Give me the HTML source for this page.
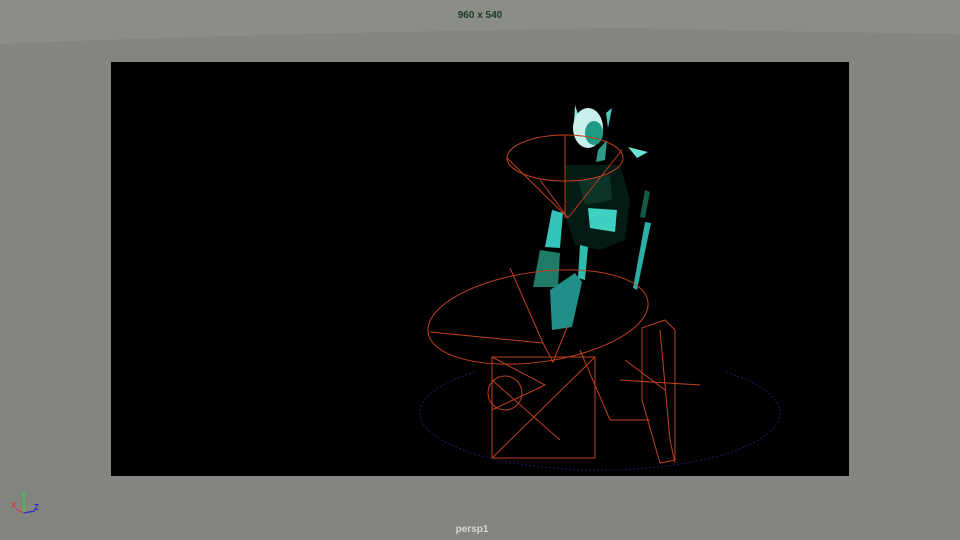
<!DOCTYPE html>
<html><head><meta charset="utf-8"><style>
html,body{margin:0;padding:0;width:960px;height:540px;overflow:hidden;background:#838581;font-family:"Liberation Sans",sans-serif}
</style></head><body>
<svg width="960" height="540" viewBox="0 0 960 540" xmlns="http://www.w3.org/2000/svg" style="position:absolute;left:0;top:0">
<defs><clipPath id="lo"><rect x="0" y="372" width="960" height="120"/></clipPath></defs>
<rect x="0" y="0" width="960" height="540" fill="#838581"/>
<path d="M0 0H960V34L820 32 L620 28 L500 30 L300 34 L100 40 L0 44Z" fill="#8b8d89"/>
<text x="480" y="18" text-anchor="middle" font-size="10" font-weight="bold" fill="#1f3a22" font-family="Liberation Sans, sans-serif">960 x 540</text>
<rect x="111" y="62" width="738" height="414" fill="#000"/>
<g>
<ellipse cx="600" cy="413" rx="180" ry="57" fill="none" stroke="#1a1a6a" stroke-width="1" stroke-dasharray="2 2" clip-path="url(#lo)"/>
<polygon points="565,165 620,165 630,200 625,240 600,250 575,245 565,215" fill="#041a14"/>
<polygon points="578,180 610,175 612,200 585,205" fill="#0c3328"/>
<polygon points="552,210 563,213 560,248 545,247" fill="#33c4bb"/>
<polygon points="588,208 617,210 615,232 590,228" fill="#3fd0c4"/>
<polygon points="580,245 588,247 585,280 578,278" fill="#2fbcb0"/>
<polygon points="540,250 560,253 558,287 533,287" fill="#1f7a66"/>
<polygon points="550,290 575,273 582,282 572,327 552,330" fill="#1f8f88"/>
<polygon points="645,222 651,223 637,290 633,288" fill="#2ab0a8"/>
<polygon points="645,190 650,192 645,218 640,217" fill="#145a48"/>
<polygon points="628,147 648,152 637,158" fill="#6fe0d4"/>
<polygon points="575,105 580,120 574,122" fill="#7fe8e0"/>
<polygon points="606,113 612,108 608,128" fill="#4fc8be"/>
<ellipse cx="588" cy="128" rx="15" ry="20" fill="#c8f0ea"/>
<ellipse cx="594" cy="133" rx="9" ry="12" fill="#1f9a84"/>
<polygon points="598,150 607,140 605,160 596,162" fill="#2f9a88"/>
</g>
<g fill="none" stroke="#c0401e" stroke-width="1">
<ellipse cx="565" cy="158" rx="58" ry="23"/>
<line x1="507" y1="158" x2="568" y2="218"/>
<line x1="622" y1="150" x2="568" y2="218"/>
<line x1="565" y1="135" x2="565" y2="218"/>
<line x1="540" y1="180" x2="568" y2="218"/>
<ellipse cx="538" cy="317" rx="111" ry="45" transform="rotate(-8 538 317)"/>
<polyline points="430,332 543,343 553,362 568,325"/>
<line x1="510" y1="268" x2="543" y2="343"/>
<rect x="492" y="357" width="103" height="101"/>
<polyline points="492,357 545,385 492,410"/>
<line x1="492" y1="458" x2="595" y2="357"/>
<line x1="492" y1="380" x2="560" y2="440"/>
<circle cx="505" cy="393" r="17"/>
<polygon points="642,328 665,320 675,330 675,460 660,463 642,400"/>
<polyline points="660,330 670,440 675,463"/>
<line x1="620" y1="380" x2="700" y2="385"/>
<line x1="625" y1="360" x2="665" y2="390"/>
<line x1="580" y1="350" x2="610" y2="420"/>
<line x1="610" y1="420" x2="650" y2="420"/>
</g>
<g stroke-width="1.2" fill="none">
<line x1="24" y1="513" x2="24" y2="497" stroke="#3ad43a"/>
<line x1="24" y1="513" x2="16" y2="509" stroke="#d23a3a"/>
<line x1="24" y1="513" x2="35" y2="511" stroke="#2a2ad0"/>
</g>
<text x="21" y="498" font-size="8" fill="#3ad43a" font-weight="bold">Y</text>
<text x="11" y="508" font-size="8" fill="#d23a3a" font-weight="bold">X</text>
<text x="34" y="510" font-size="8" fill="#2a2ad0" font-weight="bold">Z</text>
<text x="472" y="532" text-anchor="middle" font-size="10" font-weight="bold" fill="#d8d8d6">persp1</text>
</svg>
</body></html>
